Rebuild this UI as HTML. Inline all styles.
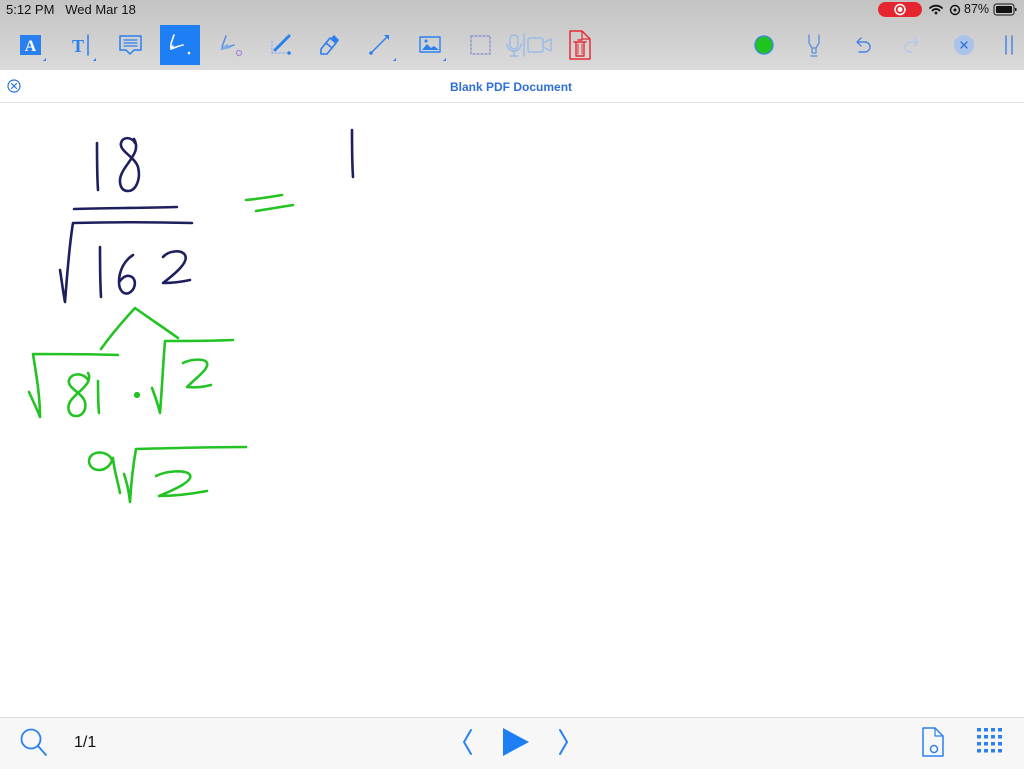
<!DOCTYPE html>
<html><head><meta charset="utf-8"><style>
body{margin:0;width:1024px;height:768px;overflow:hidden;background:#fff;font-family:"Liberation Sans",sans-serif;position:relative}
.tb{position:absolute;left:0;top:0;width:1024px;height:70px;background:linear-gradient(#c3c3c3,#dadada)}
.hdr{position:absolute;left:0;top:70px;width:1024px;height:32px;background:#fff;border-bottom:1px solid #e2e2e2}
.bot{position:absolute;left:0;top:717px;width:1024px;height:51px;background:#f7f7f7;border-top:1px solid #dcdcdc}
svg{position:absolute;left:0;top:0}
</style></head><body>
<div class="tb"></div>
<div class="hdr"></div>
<div class="bot"></div>
<div style="position:absolute;left:6px;top:2px;font-size:13px;color:#111">5:12 PM&nbsp;&nbsp;&nbsp;Wed Mar 18</div>
<div style="position:absolute;left:450px;top:80px;font-size:12px;font-weight:bold;color:#2f6fd6">Blank PDF Document</div>
<div style="position:absolute;left:74px;top:734px;font-size:16px;color:#111">1/1</div>
<div style="position:absolute;left:964px;top:2px;font-size:12.5px;color:#111">87%</div>
<svg width="1024" height="768" fill="none" stroke-linecap="round" stroke-linejoin="round">
<!-- status -->
<rect x="878" y="2" width="44" height="15" rx="7.5" fill="#e5262f"/>
<circle cx="900" cy="9.5" r="5" stroke="#fff" stroke-width="1.5"/><circle cx="900" cy="9.5" r="2.5" fill="#fff"/>
<path d="M930 8a9 9 0 0 1 12 0M932.5 10.5a5 5 0 0 1 7 0" stroke="#111" stroke-width="1.8"/><circle cx="936" cy="13" r="1.4" fill="#111"/>
<circle cx="955" cy="10" r="4.5" stroke="#111" stroke-width="1.4"/><circle cx="955" cy="10" r="1.5" fill="#111"/>
<rect x="994" y="4" width="20" height="11" rx="2.5" stroke="#111" stroke-width="1"/><rect x="996" y="6" width="16" height="7" rx="1" fill="#111"/><rect x="1015" y="8" width="1.5" height="3" fill="#111"/>
<!-- toolbar -->
<rect x="20" y="35" width="21" height="20" fill="#2b80ef"/><text x="30.5" y="51" text-anchor="middle" font-family="Liberation Serif" font-weight="bold" font-size="16" fill="#fff">A</text>
<path d="M43 61l3-3v3z" fill="#2b80ef"/>
<text x="78" y="52" text-anchor="middle" font-family="Liberation Serif" font-weight="bold" font-size="18" fill="#2b80ef">T</text><path d="M88 35v20" stroke="#2b80ef" stroke-width="1.5"/><path d="M93 61l3-3v3z" fill="#2b80ef"/>
<path d="M120 36h21v14h-7l-4 4-4-4h-6z" stroke="#2b80ef" stroke-width="1.5"/><path d="M124 40h13M124 43h13M124 46h13" stroke="#2b80ef" stroke-width="1.2"/>
<rect x="160" y="25" width="40" height="40" fill="#1e7ff5"/>
<path d="M174 35c-2 6-4 10-3 14 3-1 7-3 12-4M171 49l2-3" stroke="#fff" stroke-width="1.6"/><circle cx="189" cy="53" r="1.3" fill="#fff"/>
<path d="M226 36c-2 6-4 9-4 13 4-1 8-3 12-4" stroke="#5b8fe0" stroke-width="1.6"/><path d="M220 50l7-6 4 4z" fill="#7ba7ec"/><circle cx="239" cy="53" r="2.5" stroke="#a988d8" stroke-width="1.2"/>
<path d="M275 50l14-14" stroke="#2b80ef" stroke-width="3"/><circle cx="289" cy="53" r="1.8" fill="#2b80ef"/><path d="M272 53h16M272 41v12" stroke="#7ba7ec" stroke-width="1" stroke-dasharray="1.5 2"/>
<path d="M321 49l9-11 6 5-9 11h-6z" stroke="#2b80ef" stroke-width="1.6"/><path d="M326 43l6 5" stroke="#2b80ef" stroke-width="1.6"/><path d="M331 38l6 5 2-3-5-5z" fill="#2b80ef"/>
<path d="M372 52l16-16" stroke="#2b80ef" stroke-width="1.4"/><circle cx="371" cy="53" r="1.8" fill="#2b80ef"/><path d="M389 35l-5 0 5 5z" fill="#2b80ef"/><path d="M393 61l3-3v3z" fill="#2b80ef"/>
<rect x="420" y="37" width="20" height="15" stroke="#2b80ef" stroke-width="1.4"/><path d="M422 50l5-6 4 4 3-2 5 4z" fill="#2b80ef"/><circle cx="426" cy="41" r="1.5" fill="#2b80ef"/><path d="M443 61l3-3v3z" fill="#2b80ef"/>
<rect x="471" y="36" width="19" height="18" stroke="#7c8cd0" stroke-width="1.2" stroke-dasharray="2 2"/>
<rect x="510" y="35" width="8" height="14" rx="4" stroke="#9dbce8" stroke-width="1.5"/><path d="M507 44a7 7 0 0 0 14 0M514 51v5M510 56h8M524 34v22" stroke="#9dbce8" stroke-width="1.5"/>
<rect x="528" y="38" width="15" height="14" rx="2" stroke="#9dbce8" stroke-width="1.5"/><path d="M543 43l8-4v12l-8-4" stroke="#9dbce8" stroke-width="1.5"/>
<path d="M570 31h12l8 8v20h-20z" stroke="#e52c35" stroke-width="1.5"/><path d="M582 31v8h8" stroke="#e52c35" stroke-width="1.2"/><path d="M574 42h12M576 42v14h8v-14M578 40h4" stroke="#e52c35" stroke-width="1.4"/><path d="M578 44v10M582 44v10" stroke="#e52c35" stroke-width="1"/>
<circle cx="764" cy="45" r="9" fill="#21c321" stroke="#3a86e0" stroke-width="1.3"/>
<path d="M809 35v8l3 5h4l3-5v-8M812 48v5h4v-5M811 56h6" stroke="#5b8fe0" stroke-width="1.3"/>
<path d="M861 38l-4 4 4 4M857 42h8a5 5 0 0 1 0 10h-6" stroke="#4a86e0" stroke-width="1.4"/>
<path d="M914 38l4 4-4 4M918 42h-8a5 5 0 0 0 0 10h2" stroke="#b5c8ea" stroke-width="1.4"/>
<circle cx="964" cy="45" r="10" fill="#a9c3ea"/><path d="M961 42l6 6M967 42l-6 6" stroke="#2b72d6" stroke-width="1.3"/>
<path d="M1006 36v18M1012 36v18" stroke="#4a86e0" stroke-width="1.5"/>
<!-- header close -->
<circle cx="14" cy="86" r="6" stroke="#2b72d6" stroke-width="1.2"/><path d="M11.5 83.5l5 5M16.5 83.5l-5 5" stroke="#2b72d6" stroke-width="1.2"/>
<!-- bottom -->
<circle cx="31" cy="739" r="9.5" stroke="#2b80ef" stroke-width="1.8"/><path d="M38 746l8 9" stroke="#2b80ef" stroke-width="1.8"/>
<path d="M471 730l-7 12 7 12" stroke="#2b80ef" stroke-width="2"/>
<path d="M503 728l26 14-26 14z" fill="#1e7ff5"/>
<path d="M560 730l7 12-7 12" stroke="#2b80ef" stroke-width="2"/>
<path d="M923 728h12l8 8v20h-20z" stroke="#2b80ef" stroke-width="1.5"/><path d="M935 728v8h8" stroke="#2b80ef" stroke-width="1.2"/><circle cx="934" cy="749" r="3.5" stroke="#2b80ef" stroke-width="1.5" stroke-dasharray="1.5 1"/>
<g fill="#2b80ef"><rect x="977" y="728" width="4" height="3.5"/><rect x="984" y="728" width="4" height="3.5"/><rect x="991" y="728" width="4" height="3.5"/><rect x="998" y="728" width="4" height="3.5"/>
<rect x="977" y="735" width="4" height="3.5"/><rect x="984" y="735" width="4" height="3.5"/><rect x="991" y="735" width="4" height="3.5"/><rect x="998" y="735" width="4" height="3.5"/>
<rect x="977" y="742" width="4" height="3.5"/><rect x="984" y="742" width="4" height="3.5"/><rect x="991" y="742" width="4" height="3.5"/><rect x="998" y="742" width="4" height="3.5"/>
<rect x="977" y="749" width="4" height="3.5"/><rect x="984" y="749" width="4" height="3.5"/><rect x="991" y="749" width="4" height="3.5"/><rect x="998" y="749" width="4" height="3.5"/></g>
<!-- handwriting navy -->
<g stroke="#1d1f5f" stroke-width="2.6">
<path d="M97 143c0 15 0 32 1 47"/>
<path d="M135 143c-3-6-12-7-14 0-2 8 14 14 17 24 3 12-2 24-10 24-8 0-10-10-6-18 3-7 9-12 13-21 2-5 1-10-1-13"/>
<path d="M74 209c34-1 70-1 103-2"/>
<path d="M60 270c2 12 3 22 5 32 2-25 4-55 8-79 40-1 80-1 119 0"/>
<path d="M100 247c0 16 0 33 1 50"/>
<path d="M133 255c-8 5-14 15-14 27 0 9 5 13 10 11 6-3 8-12 3-16-5-3-9 0-12 4"/>
<path d="M163 257c5-6 18-8 22-2 4 7-9 18-22 28 9 0 18-1 27-3"/>
<path d="M352 130c0 15 0 32 1 47"/>
</g>
<!-- green -->
<g stroke="#23c323" stroke-width="2.6">
<path d="M246 200c12-1 24-3 36-5"/>
<path d="M256 211c12-2 25-4 37-6"/>
<path d="M101 349c10-14 22-28 34-41 14 10 29 20 43 30"/>
<path d="M29 392c4 9 8 17 11 25 0-22-4-44-7-63 28 0 57 0 85 1"/>
<path d="M88 380c-4-7-16-8-19 0-2 7 10 12 14 18 5 7 2 18-7 18-8 0-10-10-4-17 5-6 12-10 16-17 2-5 1-8 0-9"/>
<path d="M98 381c0 11 0 22 1 32"/>
<circle cx="137" cy="395" r="1.8" fill="#23c323"/>
<path d="M152 388c3 8 6 16 8 25 2-24 3-49 5-72 23 0 46 0 68-1"/>
<path d="M183 363c8-4 22-5 24 0 2 6-10 14-20 24 8 1 16 0 24-2"/>
<path d="M112 460c-3-8-16-10-21-4-5 6 0 14 8 14 7 0 12-5 14-12 1 12 5 24 7 35"/>
<path d="M124 474c3 9 5 18 6 28 1-18 3-36 6-53 37-1 74-2 110-2"/>
<path d="M156 476c10-5 30-7 34-1 3 6-14 14-31 21 16 0 32-2 48-5"/>
</g>
</svg>
</body></html>
